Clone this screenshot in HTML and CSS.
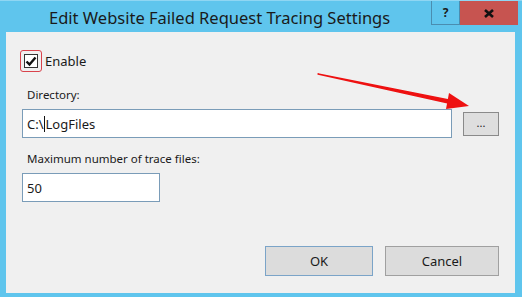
FILE: index.html
```html
<!DOCTYPE html>
<html lang="en">
<head>
    <meta charset="UTF-8">
    <title>Edit Website Failed Request Tracing Settings</title>
    <link rel="stylesheet" href="styles.css">
</head>
<body>
    <div class="window">
        <!-- Title bar -->
        <div class="titlebar">
            <div class="title">Edit Website Failed Request Tracing Settings</div>
            <div class="caption-buttons">
                <div class="cap-btn help">?</div>
                <div class="cap-btn close">
                    <svg width="10" height="9" viewBox="0 0 10 9"><path d="M1 1 L9 8 M9 1 L1 8" stroke="#111" stroke-width="2.6"/></svg>
                </div>
            </div>
        </div>

        <!-- Client area -->
        <div class="client">
            <div class="check-row">
                <div class="highlight">
                    <div class="checkbox">
                        <svg width="12" height="11" viewBox="0 0 12 11"><path d="M1.5 5.5 L4.5 8.5 L10.5 1.5" fill="none" stroke="#111" stroke-width="2.4"/></svg>
                    </div>
                </div>
                <span class="check-label">Enable</span>
            </div>

            <div class="label first">Directory:</div>
            <div class="dir-row">
                <div class="textbox dir">C:\<span class="caret"></span>LogFiles</div>
                <div class="browse">...</div>
            </div>

            <div class="label">Maximum number of trace files:</div>
            <div class="textbox count">50</div>

            <div class="actions">
                <div class="button ok">OK</div>
                <div class="button cancel">Cancel</div>
            </div>

            <!-- annotation arrow -->
            <svg class="arrow" width="170" height="50" viewBox="0 0 170 50">
                <path d="M2 2 L138 29 L137 32 Z" fill="#ee1111" stroke="#ee1111" stroke-width="1.5" stroke-linejoin="round"/>
                <path d="M153 34 L133 21 L130 37 Z" fill="#ee1111"/>
            </svg>
        </div>
    </div>
</body>
</html>
```

FILE: styles.css
```css
body {
    margin: 0;
    font-family: "Noto Sans", "Open Sans", sans-serif;
    background-color: #5fc5ed;
}
.window {
    width: 522px;
    height: 297px;
    display: flex;
    flex-direction: column;
    background-color: #5fc5ed;
    border-top: 1px solid #8fd6f3;
    box-sizing: border-box;
}
.titlebar {
    height: 31px;
    display: flex;
}
.title {
    flex: 1;
    padding-left: 49px;
    padding-top: 5px;
    font-size: 16.5px;
    color: #1a1a1a;
    white-space: nowrap;
}
.caption-buttons {
    display: flex;
    margin-right: 4px;
}
.cap-btn {
    height: 24px;
    display: flex;
    align-items: center;
    justify-content: center;
    box-sizing: border-box;
}
.help {
    width: 29px;
    border: 1px solid #4a8db0;
    border-top: none;
    font-size: 12px;
    font-weight: bold;
    color: #1a1a1a;
}
.close {
    width: 58px;
    background-color: #c75450;
}
.client {
    flex: 1;
    margin: 0 7px 4px 6px;
    background-color: #f0f0f0;
    position: relative;
    padding: 17px 0 0 16px;
    font-size: 11.5px;
    color: #1a1a1a;
}
.check-row {
    display: flex;
    align-items: center;
    height: 24px;
}
.highlight {
    width: 22px;
    height: 22px;
    border: 1px solid #d9434c;
    border-radius: 3px;
    box-sizing: border-box;
    display: flex;
    align-items: center;
    justify-content: center;
    margin-left: -2px;
}
.checkbox {
    width: 14px;
    height: 14px;
    border: 1px solid #333;
    background: #fff;
    box-sizing: border-box;
    display: flex;
    align-items: center;
    justify-content: center;
}
.check-label {
    margin-left: 3px;
    font-size: 13px;
}
.label {
    margin-top: 13px;
    margin-left: 5px;
    height: 17px;
}
.label.first {
    margin-top: 14px;
}
.dir-row {
    display: flex;
    align-items: center;
    margin-top: 5px;
}
.textbox {
    height: 29px;
    background: #fff;
    border: 1px solid #7a9cb8;
    box-sizing: border-box;
    padding-left: 4px;
    display: flex;
    align-items: center;
    font-size: 13px;
}
.dir {
    width: 430px;
}
.caret {
    display: inline-block;
    width: 1px;
    height: 16px;
    background: #111;
    margin-right: 1px;
}
.browse {
    width: 36px;
    height: 24px;
    margin-left: 11px;
    border: 1px solid #8a8a8a;
    background: #dedede;
    box-sizing: border-box;
    text-align: center;
    font-size: 11px;
    line-height: 20px;
}
.count {
    width: 138px;
    margin-top: 5px;
}
.actions {
    display: flex;
    justify-content: flex-end;
    gap: 12px;
    margin-top: 44px;
    margin-right: 16px;
}
.button {
    height: 30px;
    border: 1px solid #a0a0a0;
    background: #dcdcdc;
    box-sizing: border-box;
    display: flex;
    align-items: center;
    justify-content: center;
    font-size: 13px;
}
.ok {
    width: 108px;
    border-color: #7ba4c8;
}
.cancel {
    width: 114px;
}
.arrow {
    position: absolute;
    left: 310px;
    top: 40px;
}
```
